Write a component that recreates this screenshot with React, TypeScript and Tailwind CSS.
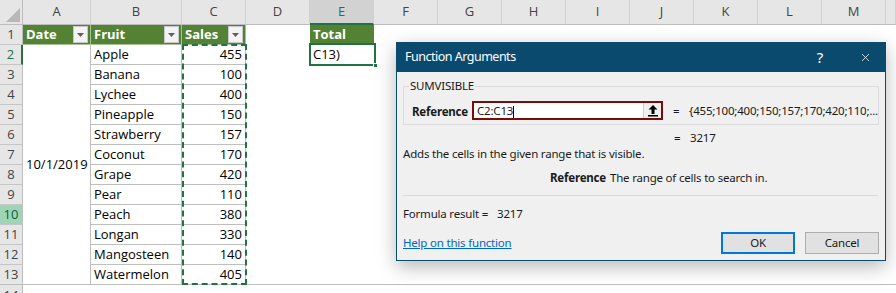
import { X } from 'lucide-react'

const LETTERS = ['A', 'B', 'C', 'D', 'E', 'F', 'G', 'H', 'I', 'J', 'K', 'L', 'M', '']

const DATA: [string, number][] = [
  ['Apple', 455],
  ['Banana', 100],
  ['Lychee', 400],
  ['Pineapple', 150],
  ['Strawberry', 157],
  ['Coconut', 170],
  ['Grape', 420],
  ['Pear', 110],
  ['Peach', 380],
  ['Longan', 330],
  ['Mangosteen', 140],
  ['Watermelon', 405],
]

const sheetFont = { fontFamily: '"Open Sans", "Noto Sans", sans-serif' }
const uiFont = { fontFamily: '"Noto Sans", "Open Sans", sans-serif' }

function FilterBtn() {
  return (
    <div className="w-[15px] h-[17px] shrink-0 bg-[#f3f3f3] border border-[#c8c8c8] flex items-center justify-center">
      <svg width="7" height="4" viewBox="0 0 7 4">
        <path d="M0 0h7L3.5 4z" fill="#5f5f5f" />
      </svg>
    </div>
  )
}

function RowHead({ n, active, marked, last }: { n: number; active?: boolean; marked?: boolean; last?: boolean }) {
  return (
    <div
      className={`flex items-center justify-center text-[13px] border-b border-[#c6c6c6] ${
        marked ? 'bg-[#9fd5b7] text-[#0e5b33]' : 'bg-[#e6e6e6] text-[#444]'
      } ${active ? 'border-r-2 border-r-[#217346] text-[#217346]' : 'border-r border-r-[#bdbdbd]'} ${
        last ? 'border-b-[#bdbdbd]' : ''
      }`}
    >
      {n}
    </div>
  )
}

function Sheet() {
  return (
    <div
      className="grid grid-cols-[23px_68px_91px_64px_64px_64px_64px_64px_64px_64px_64px_64px_64px_64px_10px] grid-rows-[25px_repeat(13,20px)_8px] w-[896px] h-[293px] bg-white text-[13px] text-black"
      style={sheetFont}
    >
      {/* column headers */}
      <div className="relative bg-[#e6e6e6] border-r border-b border-[#bdbdbd]">
        <svg className="absolute right-[2px] bottom-[2px]" width="14" height="14" viewBox="0 0 14 14">
          <path d="M14 0v14H0z" fill="#b8b8b8" />
        </svg>
      </div>
      {LETTERS.map((l, i) => (
        <div
          key={i}
          className={`flex items-center justify-center text-[13px] border-r border-[#d0d0d0] ${
            l === 'E'
              ? 'bg-[#d2d2d2] text-[#217346] border-b-2 border-b-[#217346]'
              : 'bg-[#e6e6e6] text-[#444] border-b border-b-[#bdbdbd]'
          }`}
        >
          {l}
        </div>
      ))}

      {/* row 1 */}
      <RowHead n={1} />
      {['Date', 'Fruit', 'Sales'].map(h => (
        <div key={h} className="flex items-center justify-between bg-[#548235] border-r border-b border-[#a9c19a] pl-[3px] pr-[2px]">
          <span className="font-bold text-white">{h}</span>
          <FilterBtn />
        </div>
      ))}
      <div />
      <div className="flex items-center bg-[#548235] pl-[3px] font-bold text-white">Total</div>
      {Array.from({ length: 9 }).map((_, i) => (
        <div key={i} />
      ))}

      {/* rows 2..13 */}
      {DATA.map(([fruit, sales], r) => {
        const row = r + 2
        const last = row === 13
        const lb = last ? 'border-b border-[#bfbfbf]' : ''
        return [
          <RowHead key={`h${row}`} n={row} active={row === 2} marked={row === 10} last={last} />,
          row === 2 ? (
            <div key="a" className="row-span-12 flex items-center pl-[3px] border-r border-b border-[#bfbfbf]">
              10/1/2019
            </div>
          ) : null,
          <div key={`b${row}`} className="flex items-center pl-[3px] border-r border-b border-[#bfbfbf]">
            {fruit}
          </div>,
          <div key={`c${row}`} className="flex items-center justify-end pr-[3px] border-r border-b border-[#bfbfbf]">
            {sales}
          </div>,
          <div key={`d${row}`} className={lb} />,
          <div key={`e${row}`} className={`flex items-center pl-[3px] ${lb}`}>
            {row === 2 ? 'C13)' : ''}
          </div>,
          ...Array.from({ length: 9 }).map((_, i) => <div key={`x${row}-${i}`} className={lb} />),
        ]
      })}

      {/* row 14 */}
      <div className="flex justify-center bg-[#e6e6e6] border-r border-[#bdbdbd] text-[13px] text-[#444] leading-[20px] overflow-hidden">
        14
      </div>
    </div>
  )
}

function UploadArrow() {
  return (
    <svg width="12" height="13" viewBox="0 0 12 13">
      <path d="M6 1L1.5 5.5h3V10h3V5.5h3z" fill="#000" />
      <rect x="1" y="11" width="10" height="1.5" fill="#000" />
    </svg>
  )
}

function Dialog() {
  return (
    <div
      className="absolute left-[396px] top-[42px] w-[490px] h-[219px] bg-[#f0f0f0] border border-[#0a4a6f] shadow-[0_6px_18px_rgba(0,0,0,0.28)] text-[11.5px] tracking-[-0.2px] text-[#1a1a1a] flex flex-col"
      style={uiFont}
    >
      <div className="h-[29px] shrink-0 bg-[#0a4a6f] flex items-center pl-[8px] pr-[13px] text-white">
        <span className="text-[12.5px] tracking-[-0.5px] flex-1">Function Arguments</span>
        <span className="text-[15px] mr-[36px]">?</span>
        <X className="w-[13px] h-[13px]" strokeWidth={1.4} />
      </div>

      <div className="flex flex-col px-[6px]">
        {/* group box */}
        <div className="relative mt-[14px] h-[39px] border border-[#dcdcdc] flex items-end pb-[4px] pl-[8px] overflow-visible">
          <span className="absolute left-[5px] -top-[9px] px-[1px] bg-[#f0f0f0] leading-[16px]">SUMVISIBLE</span>
          <span className="font-bold w-[60px] shrink-0">Reference</span>
          <div className="w-[191px] h-[19px] shrink-0 border-2 border-[#7b0c0c] bg-white flex items-center">
            <span className="flex-1 pl-[3px] leading-[15px]">
              C2:C13<span className="inline-block w-px h-[12px] bg-black align-middle" />
            </span>
            <div className="w-[18px] h-full bg-[#f0f0f0] border-l border-[#cfcfcf] flex items-center justify-center">
              <UploadArrow />
            </div>
          </div>
          <span className="ml-[10px] w-[16px] shrink-0 mb-[1px]">=</span>
          <span className="mb-[1px] whitespace-nowrap overflow-hidden">{'{455;100;400;150;157;170;420;110;...'}</span>
        </div>

        <div className="flex h-[16px] mt-[5px] items-center">
          <span className="ml-[271px] w-[16px] shrink-0">=</span>
          <span>3217</span>
        </div>

        <div className="h-[16px] flex items-center">Adds the cells in the given range that is visible.</div>

        <div className="h-[16px] mt-[8px] flex items-center pl-[147px]">
          <span className="font-bold w-[60px] shrink-0">Reference</span>
          <span>The range of cells to search in.</span>
        </div>

        <div className="h-px mt-[9px] bg-[#d9d9d9] mr-[1px]" />

        <div className="h-[16px] mt-[10px] flex items-center">
          <span className="w-[94px] shrink-0">Formula result =</span>
          <span>3217</span>
        </div>

        <div className="mt-[10px] flex items-center">
          <span className="flex-1 text-[#0066cc] underline">Help on this function</span>
          <button className="w-[74px] h-[22px] shrink-0 bg-[#e1e1e1] border-2 border-[#0078d7]">OK</button>
          <button className="w-[74px] h-[22px] shrink-0 ml-[10px] bg-[#e1e1e1] border border-[#adadad]">Cancel</button>
        </div>
      </div>
    </div>
  )
}

export default function App() {
  return (
    <div className="relative w-[896px] h-[293px] overflow-hidden bg-white">
      <Sheet />
      {/* marching ants around C2:C13 */}
      <div className="absolute left-[182px] top-[44px] w-[65px] h-[241px] border-2 border-dashed border-[#217346]" />
      {/* active cell E2 */}
      <div className="absolute left-[309px] top-[43px] w-[67px] h-[23px] border-2 border-[#217346]" />
      <div className="absolute left-[373px] top-[63px] w-[5px] h-[5px] bg-[#217346] border border-white" />
      <Dialog />
    </div>
  )
}
